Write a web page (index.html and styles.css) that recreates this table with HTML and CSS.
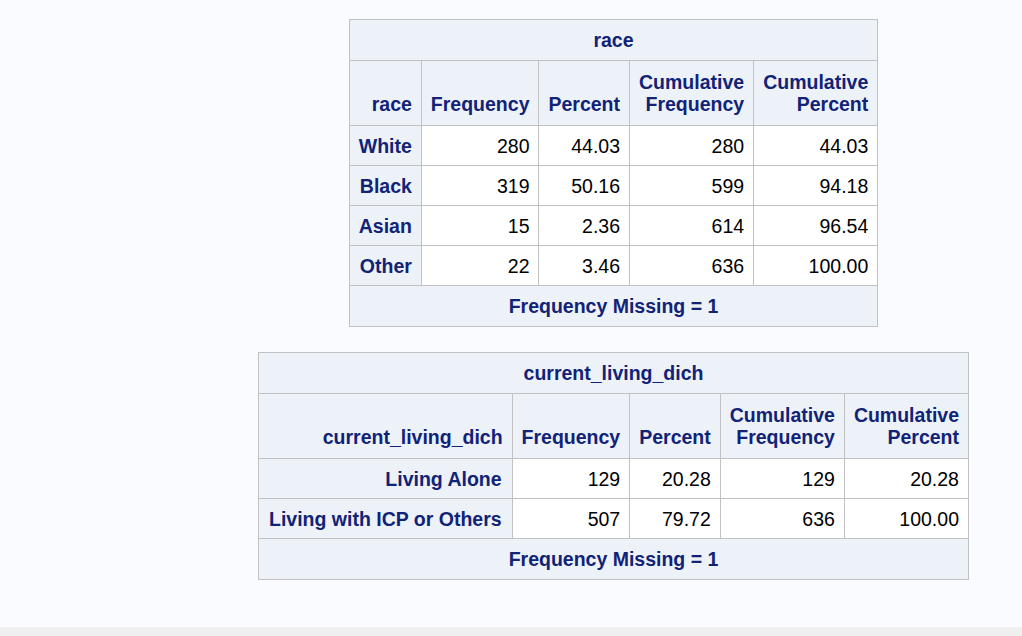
FILE: index.html
```html
<!DOCTYPE html>
<html>
<head>
<meta charset="utf-8">
<link rel="stylesheet" href="styles.css">
</head>
<body>
<main class="page">
  <table class="freq">
    <thead>
      <tr><th class="title" colspan="5">race</th></tr>
      <tr class="colheads">
        <th>race</th>
        <th>Frequency</th>
        <th>Percent</th>
        <th>Cumulative<br>Frequency</th>
        <th>Cumulative<br>Percent</th>
      </tr>
    </thead>
    <tbody>
      <tr><th>White</th><td>280</td><td>44.03</td><td>280</td><td>44.03</td></tr>
      <tr><th>Black</th><td>319</td><td>50.16</td><td>599</td><td>94.18</td></tr>
      <tr><th>Asian</th><td>15</td><td>2.36</td><td>614</td><td>96.54</td></tr>
      <tr><th>Other</th><td>22</td><td>3.46</td><td>636</td><td>100.00</td></tr>
    </tbody>
    <tfoot>
      <tr><th class="title" colspan="5">Frequency Missing = 1</th></tr>
    </tfoot>
  </table>

  <table class="freq wide">
    <thead>
      <tr><th class="title" colspan="5">current_living_dich</th></tr>
      <tr class="colheads">
        <th>current_living_dich</th>
        <th>Frequency</th>
        <th>Percent</th>
        <th>Cumulative<br>Frequency</th>
        <th>Cumulative<br>Percent</th>
      </tr>
    </thead>
    <tbody>
      <tr><th>Living Alone</th><td>129</td><td>20.28</td><td>129</td><td>20.28</td></tr>
      <tr><th>Living with ICP or Others</th><td>507</td><td>79.72</td><td>636</td><td>100.00</td></tr>
    </tbody>
    <tfoot>
      <tr><th class="title" colspan="5">Frequency Missing = 1</th></tr>
    </tfoot>
  </table>
</main>
<footer class="bottom-band"></footer>
</body>
</html>
```

FILE: styles.css
```css
html, body {
  margin: 0;
  padding: 0;
}

body {
  background: #fafbfe;
  font-family: "Liberation Sans", Arial, sans-serif;
  width: 1022px;
  height: 636px;
  overflow: hidden;
  display: flex;
  flex-direction: column;
}

.page {
  flex: 1;
  display: flex;
  flex-direction: column;
  align-items: center;
  gap: 25px;
  padding: 19px 0 0 205px;
}

.bottom-band {
  height: 9px;
  background: #efefef;
}

.freq {
  border-collapse: collapse;
  border: 1px solid #c1c1c1;
  font-size: 19.5px;
  line-height: 22px;
}

.freq th,
.freq td {
  border: 1px solid #c1c1c1;
  padding: 8.5px 9px 8.5px 9px;
  text-align: right;
  vertical-align: bottom;
  white-space: nowrap;
}

.freq th {
  background: #edf2f9;
  color: #112277;
  font-weight: bold;
}

.freq td {
  background: #ffffff;
  color: #000000;
  font-weight: normal;
}

.freq th.title {
  text-align: center;
  padding-top: 9px;
  padding-bottom: 9px;
}

.freq .colheads th {
  padding-top: 10px;
  padding-bottom: 10px;
}

.freq.wide tbody th {
  padding-left: 10px;
  padding-right: 10px;
}
```
